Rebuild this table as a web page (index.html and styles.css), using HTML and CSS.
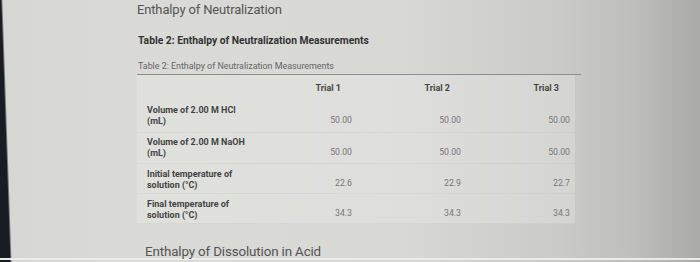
FILE: index.html
```html
<!DOCTYPE html>
<html lang="en">
<head>
<meta charset="utf-8">
<title>Enthalpy of Neutralization</title>
<link rel="stylesheet" href="styles.css">
</head>
<body>
<div class="screen">
  <h1 class="title">Enthalpy of Neutralization</h1>
  <h2 class="table-title">Table 2: Enthalpy of Neutralization Measurements</h2>
  <div class="table-block">
    <div class="caption">Table 2: Enthalpy of Neutralization Measurements</div>
    <table class="data">
      <colgroup>
        <col class="c-label"><col class="c-val"><col class="c-val"><col class="c-val">
      </colgroup>
      <thead>
        <tr><th></th><th>Trial 1</th><th>Trial 2</th><th>Trial 3</th></tr>
      </thead>
      <tbody>
        <tr class="r1"><td class="label">Volume of 2.00 M HCl<br>(mL)</td><td>50.00</td><td>50.00</td><td>50.00</td></tr>
        <tr class="r2"><td class="label">Volume of 2.00 M NaOH<br>(mL)</td><td>50.00</td><td>50.00</td><td>50.00</td></tr>
        <tr class="r3"><td class="label">Initial temperature of<br>solution (°C)</td><td>22.6</td><td>22.9</td><td>22.7</td></tr>
        <tr class="r4"><td class="label">Final temperature of<br>solution (°C)</td><td>34.3</td><td>34.3</td><td>34.3</td></tr>
      </tbody>
    </table>
  </div>
  <h1 class="title next">Enthalpy of Dissolution in Acid</h1>
</div>
</body>
</html>
```

FILE: styles.css
```css
* { box-sizing: border-box; }
html, body { margin: 0; padding: 0; }
body {
  width: 700px;
  height: 262px;
  overflow: hidden;
  font-family: Roboto, "Liberation Sans", sans-serif;
  background:
    linear-gradient(88deg, #1b1b24 0, #1b1b24 10px, rgba(27,27,36,0) 12px),
    linear-gradient(to right, #d6d6d2 0, #dadad6 120px, #d8d8d5 400px, #cacac6 560px, #bdbdb9 640px, #a9a9a7 700px);
}
.screen {
  height: 260px;
  padding-left: 137px;
  display: flex;
  flex-direction: column;
  border-bottom: 2px solid #ececea;
}
.title {
  margin: 2px 0 0 0;
  font-size: 13px;
  line-height: 16px;
  font-weight: 400;
  color: #555;
  letter-spacing: -0.15px;
}
.table-title {
  margin: 17px 0 0 1px;
  font-size: 10.3px;
  line-height: 12px;
  font-weight: 700;
  color: #333;
}
.table-block {
  margin-top: 14px;
  width: 440px;
}
.caption {
  font-size: 8.9px;
  line-height: 10px;
  color: #666;
  padding: 0 0 3px 1px;
  border-bottom: 1px solid #8e8e8e;
  width: 444px;
}
.data {
  border-collapse: collapse;
  width: 438px;
  table-layout: fixed;
  background: rgba(236, 238, 234, 0.35);
  color: #444;
  font-size: 8.7px;
}
.c-label { width: 111px; }
.c-val { width: 109px; }
.data th {
  height: 26px;
  font-size: 9px;
  font-weight: 700;
  text-align: right;
  padding: 0 16px 0 0;
  vertical-align: middle;
  color: #444;
}
.data td {
  vertical-align: top;
  text-align: right;
  padding: 14px 5px 0 0;
  line-height: 11px;
  color: #777;
  border-bottom: 1px solid rgba(170,170,170,0.15);
}
.data td.label {
  text-align: left;
  padding: 4px 0 0 10px;
  font-size: 9px;
  font-weight: 700;
  color: #444;
}
.r1 td, .r2 td { height: 31px; }
.r3 td, .r4 td { height: 30px; }
.r3 td.label, .r4 td.label { padding-top: 5px; }
.r3 td:not(.label), .r4 td:not(.label) { padding-top: 14px; }
.title.next {
  margin-top: 20px;
  margin-left: 8px;
  font-size: 13.4px;
}
```
